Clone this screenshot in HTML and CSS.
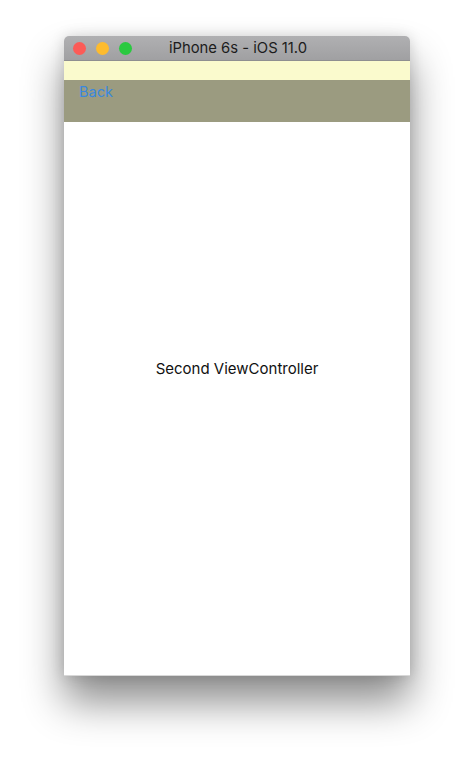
FILE: index.html
```html
<!DOCTYPE html>
<html lang="en">
<head>
    <meta charset="UTF-8">
    <meta name="viewport" content="width=device-width, initial-scale=1.0">
    <title>iPhone 6s - iOS 11.0</title>
    <link rel="stylesheet" href="styles.css">
</head>
<body>
    <div class="window">
        <div class="titlebar">
            <div class="lights">
                <span class="light red"></span>
                <span class="light yellow"></span>
                <span class="light green"></span>
            </div>
            <div class="title">iPhone 6s - iOS 11.0</div>
        </div>
        <div class="status-bar"></div>
        <div class="nav-bar">
            <a class="back" href="#">Back</a>
        </div>
        <div class="content">
            <p class="label">Second ViewController</p>
        </div>
    </div>
</body>
</html>
```

FILE: styles.css
```css
* {
    margin: 0;
    padding: 0;
    box-sizing: border-box;
}

body {
    background: #ffffff;
    font-family: "Inter", "Liberation Sans", sans-serif;
    padding: 36px 0 0 64px;
    min-height: 768px;
}

.window {
    width: 346px;
    border-radius: 5px 5px 0 0;
    overflow: hidden;
    background: #fff;
    box-shadow: 0 26px 40px rgba(0, 0, 0, 0.45), 0 0 14px rgba(0, 0, 0, 0.15);
}

.titlebar {
    position: relative;
    height: 25px;
    background: linear-gradient(to bottom, #b0b0b2, #a0a0a2);
    border-bottom: 1px solid #8e8e90;
    display: flex;
    align-items: center;
    justify-content: center;
}

.lights {
    position: absolute;
    left: 9px;
    top: 6px;
    display: flex;
    gap: 10px;
}

.light {
    width: 13px;
    height: 13px;
    border-radius: 50%;
}

.red { background: #fc5b57; }
.yellow { background: #fdbb2e; }
.green { background: #2ac940; }

.title {
    font-size: 14.8px;
    color: #1c1c1c;
    padding-left: 2px;
}

.status-bar {
    height: 19px;
    background: #fafacd;
}

.nav-bar {
    height: 42px;
    background: #9b9b80;
    padding: 1px 0 0 15px;
}

.back {
    font-size: 14.5px;
    color: #3a88de;
    text-decoration: none;
}

.content {
    height: 554px;
    display: flex;
    align-items: center;
    justify-content: center;
    padding-bottom: 60px;
    border-bottom: 1px solid #d8d8d8;
}

.label {
    font-size: 15px;
    color: #111;
}
```
